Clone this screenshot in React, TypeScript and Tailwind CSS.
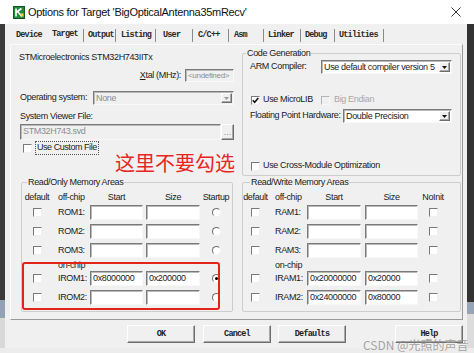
import React from "react";

const sunken =
  "border border-t-[#7a7a7a] border-l-[#7a7a7a] border-r-[#f8f8f8] border-b-[#f8f8f8] shadow-[inset_1px_1px_0_#b9b9b9]";
const raised =
  "border border-t-[#ffffff] border-l-[#ffffff] border-r-[#6e6e6e] border-b-[#6e6e6e] shadow-[inset_-1px_-1px_0_#a8a8a8]";

function Check({ checked = false, disabled = false }: { checked?: boolean; disabled?: boolean }) {
  return (
    <div
      className={`w-[9px] h-[9px] shrink-0 flex items-center justify-center border ${
        disabled
          ? "bg-[#f0f0f0] border-t-[#b4b4b4] border-l-[#b4b4b4] border-r-[#f8f8f8] border-b-[#f8f8f8]"
          : "bg-white border-t-[#7a7a7a] border-l-[#7a7a7a] border-r-[#f0f0f0] border-b-[#f0f0f0]"
      }`}
    >
      {checked && (
        <svg width="7" height="7" viewBox="0 0 7 7">
          <path d="M0.8 3.2 L2.7 5.2 L6.3 1" stroke="#111" strokeWidth="1.6" fill="none" />
        </svg>
      )}
    </div>
  );
}

function Radio({ on = false }: { on?: boolean }) {
  return (
    <div className="w-[9px] h-[9px] rounded-full bg-white border border-t-[#6e6e6e] border-l-[#6e6e6e] border-r-[#f4f4f4] border-b-[#f4f4f4] flex items-center justify-center">
      {on && <div className="w-[3px] h-[3px] rounded-full bg-black" />}
    </div>
  );
}

function Field({ w, value = "", disabled = false }: { w: string; value?: string; disabled?: boolean }) {
  return (
    <div
      className={`${w} h-[15px] shrink-0 ${sunken} ${
        disabled ? "bg-[#f0f0f0] text-[#8d8d8d]" : "bg-white text-[#222]"
      } flex items-center pl-[2px] text-[9px] tracking-[-0.35px] leading-none`}
    >
      {value}
    </div>
  );
}

function Select({ w, value, disabled = false }: { w: string; value: string; disabled?: boolean }) {
  return (
    <div
      className={`${w} h-[14px] shrink-0 ${sunken} ${
        disabled ? "bg-[#f0f0f0] text-[#8d8d8d]" : "bg-white text-[#1b1b1b]"
      } flex items-center pl-[2px] pr-[1px] text-[9px] tracking-[-0.35px] leading-none`}
    >
      <span className="flex-1">{value}</span>
      <div className={`w-[11px] h-[10px] bg-[#f0f0f0] ${raised} flex items-center justify-center`}>
        <svg width="5" height="3" viewBox="0 0 5 3">
          <path d="M0 0 H5 L2.5 3 Z" fill={disabled ? "#9a9a9a" : "#111"} />
        </svg>
      </div>
    </div>
  );
}

function Button({ label }: { label: string }) {
  return (
    <div
      className={`w-[68px] h-[18px] bg-[#f0f0f0] ${raised} flex items-center justify-center font-['Liberation_Mono',monospace] font-bold text-[8.5px] tracking-[-0.8px] text-[#222]`}
    >
      {label}
    </div>
  );
}

type Tab = { label: string; w: string; pl: string; sep: boolean; sel?: boolean; last?: boolean };
const tabs: Tab[] = [
  { label: "Device", w: "w-[38px]", pl: "pl-[6px]", sep: false },
  { label: "Target", w: "w-[35px]", pl: "pl-[4px]", sep: false, sel: true },
  { label: "Output", w: "w-[32px]", pl: "pl-[4px]", sep: true },
  { label: "Listing", w: "w-[40px]", pl: "pl-[5px]", sep: true },
  { label: "User", w: "w-[37px]", pl: "pl-[7px]", sep: true },
  { label: "C/C++", w: "w-[36px]", pl: "pl-[5px]", sep: true },
  { label: "Asm", w: "w-[35px]", pl: "pl-[5px]", sep: true },
  { label: "Linker", w: "w-[37px]", pl: "pl-[4px]", sep: true },
  { label: "Debug", w: "w-[34px]", pl: "pl-[4px]", sep: true },
  { label: "Utilities", w: "w-[50px]", pl: "pl-[4px]", sep: true, last: true },
];

function Legend({ text, ml }: { text: string; ml: string }) {
  return (
    <legend className={`${ml} px-[1px] h-[11px] leading-[11px] text-[9px] tracking-[-0.35px] text-[#1b1b1b]`}>{text}</legend>
  );
}

type Row = { name: string; start: string; size: string; on?: boolean };

function MemoryGroup({
  title,
  legendMl,
  colA,
  colB,
  colC,
  gap,
  colD,
  colE,
  last,
  offRows,
  onRows,
  radio,
}: {
  title: string;
  legendMl: string;
  colA: string;
  colB: string;
  colC: string;
  gap: string;
  colD: string;
  colE: string;
  last: string;
  offRows: Row[];
  onRows: Row[];
  radio: boolean;
}) {
  const lastCell = (r: Row) => (
    <div className={`${colE} flex justify-center`}>{radio ? <Radio on={r.on} /> : <Check />}</div>
  );
  const row = (r: Row, mt: string) => (
    <div key={r.name} className={`flex items-center h-[15px] ${mt}`}>
      <div className={`${colA} flex justify-center`}>
        <Check />
      </div>
      <div className={`${colB} text-[9px] tracking-[-0.35px] text-[#1b1b1b]`}>{r.name}</div>
      <Field w={colC} value={r.start} />
      <div className={gap} />
      <Field w={colD} value={r.size} />
      {lastCell(r)}
    </div>
  );
  return (
    <fieldset className="h-[135px] border border-[#cdcdcd] rounded-[2px] flex flex-col">
      <Legend text={title} ml={legendMl} />
      <div className="flex items-center h-[10px] mt-[4px] text-[9px] tracking-[-0.35px] text-[#1b1b1b] leading-none">
        <div className={`${colA} text-center`}>default</div>
        <div className={colB}>off-chip</div>
        <div className={`${colC} text-center`}>Start</div>
        <div className={gap} />
        <div className={`${colD} text-center`}>Size</div>
        <div className={`${colE} text-center`}>{last}</div>
      </div>
      {row(offRows[0], "mt-[3px]")}
      {row(offRows[1], "mt-[4px]")}
      {row(offRows[2], "mt-[4px]")}
      <div className="flex items-center h-[10px] mt-[2px] text-[9px] tracking-[-0.35px] text-[#1b1b1b] leading-none">
        <div className={colA} />
        <div className={colB}>on-chip</div>
      </div>
      {row(onRows[0], "mt-[1px]")}
      {row(onRows[1], "mt-[4px]")}
    </fieldset>
  );
}

function KeilIcon() {
  return (
    <svg width="12" height="13" viewBox="0 0 12 13">
      <rect x="0" y="0" width="12" height="13" fill="#1f8a3b" />
      <rect x="0.5" y="0.5" width="11" height="12" fill="none" stroke="#0e5a22" />
      <path d="M3 2.5 V10.5 M3 6.5 L8.5 2.5 M4.5 5.5 L9 10.5" stroke="#ffffff" strokeWidth="1.6" fill="none" />
      <rect x="7.5" y="7.5" width="3" height="3" fill="#f2d24b" />
    </svg>
  );
}

export default function App() {
  return (
    <div className="w-[474px] h-[353px] overflow-hidden bg-[#e6e6e6] flex flex-col relative font-['Liberation_Sans',Arial,sans-serif] text-[9px] text-[#1b1b1b]">
      {/* title bar */}
      <div className="h-[24px] shrink-0 bg-white flex items-center">
        <div className="ml-[13px] flex">
          <KeilIcon />
        </div>
        <div className="ml-[3px] text-[11px] tracking-[-0.3px] text-[#111] leading-none">
          Options for Target 'BigOpticalAntenna35mRecv'
        </div>
        <div className="ml-auto mr-[13px] flex">
          <svg width="10" height="10" viewBox="0 0 10 10">
            <path d="M0.5 0.5 L9.5 9.5 M9.5 0.5 L0.5 9.5" stroke="#333" strokeWidth="1" />
          </svg>
        </div>
      </div>

      <div className="flex h-[324px] shrink-0">
        {/* left background strip */}
        <div className="w-[5px] flex flex-col">
          <div className="h-[276px] bg-[#3a3a3a]" />
          <div className="h-[18px] bg-[#93a1b4]" />
          <div className="flex-1 bg-[#d9d9d9]" />
        </div>

        {/* dialog body */}
        <div className="w-[462px] bg-[#f0f0f0] flex flex-col">
          {/* tabs */}
          <div className="h-[20px] pl-[5px] flex items-end font-['Liberation_Mono',monospace] font-bold text-[8.5px] tracking-[-0.8px] text-[#2a2a2a]">
            {tabs.map((t) => (
              <div
                key={t.label}
                className={`${t.w} ${t.pl} shrink-0 flex items-center ${
                  t.sel ? "h-[16px] mb-[2px]" : "h-[13px] mb-[2px]"
                } ${t.sep ? "border-l border-l-[#8a8a8a]" : ""} ${t.last ? "border-r border-r-[#8a8a8a]" : ""}`}
              >
                {t.label}
              </div>
            ))}
          </div>

          {/* tab page */}
          <div className="ml-[5px] w-[453px] h-[276px] border border-t-[#fbfbfb] border-l-[#fbfbfb] border-r-[#9a9a9a] border-b-[#9a9a9a] flex">
            {/* left column */}
            <div className="w-[226px] flex flex-col">
              <div className="mt-[7px] h-[11px] pl-[8px] leading-[11px] tracking-[-0.35px]">
                STMicroelectronics STM32H743IITx
              </div>
              <div className="mt-[6px] h-[13px] flex items-center justify-end pr-[3px]">
                <span className="tracking-[-0.35px] mr-[4px]">
                  <span className="underline">X</span>tal (MHz):
                </span>
                <div className={`w-[49px] h-[13px] ${sunken} bg-[#f0f0f0] text-[#8d8d8d] text-[8px] tracking-[-0.3px] flex items-center pl-[2px] leading-none`}>
                  &lt;undefined&gt;
                </div>
              </div>
              <div className="mt-[9px] h-[14px] flex items-center pl-[9px]">
                <div className="w-[73px] tracking-[-0.35px]">Operating system:</div>
                <Select w="w-[141px]" value="None" disabled />
              </div>
              <div className="mt-[6px] h-[10px] pl-[9px] leading-[10px] tracking-[-0.35px]">System Viewer File:</div>
              <div className="mt-[3px] h-[16px] flex pl-[9px]">
                <div className={`w-[201px] h-[16px] ${sunken} bg-[#f0f0f0] text-[#8d8d8d] flex items-center pl-[2px] tracking-[-0.35px]`}>
                  STM32H743.svd
                </div>
                <div className={`w-[13px] h-[16px] bg-[#f0f0f0] ${raised} flex items-end justify-center pb-[2px] text-[#8d8d8d] leading-none`}>
                  ...
                </div>
              </div>
              <div className="mt-[1px] h-[14px] flex items-center pl-[12px]">
                <Check />
                <div className="ml-[3px] h-[14px] border border-dotted border-[#555] flex items-center px-[1px] tracking-[-0.45px] whitespace-nowrap">
                  Use Custom File
                </div>
              </div>
              <div className="-mt-[2px] h-[20px] pl-[104px] flex items-center font-['Noto_Sans_CJK_SC',sans-serif] text-[20px] leading-[20px] text-[#e8261e]">
                这里不要勾选
              </div>
              <div className="mt-[4px] ml-[10px] w-[212px] relative">
                <MemoryGroup
                  title="Read/Only Memory Areas"
                  legendMl="ml-[5px]"
                  colA="w-[30px]"
                  colB="w-[38px] pl-[6px]"
                  colC="w-[53px]"
                  gap="w-[3px]"
                  colD="w-[54px]"
                  colE="w-[32px]"
                  last="Startup"
                  radio
                  offRows={[
                    { name: "ROM1:", start: "", size: "" },
                    { name: "ROM2:", start: "", size: "" },
                    { name: "ROM3:", start: "", size: "" },
                  ]}
                  onRows={[
                    { name: "IROM1:", start: "0x8000000", size: "0x200000", on: true },
                    { name: "IROM2:", start: "", size: "" },
                  ]}
                />
                <div className="absolute left-[1px] top-[85px] w-[198px] h-[48px] border-2 border-[#e2231a] rounded-[3px]" />
              </div>
            </div>

            {/* right column */}
            <div className="w-[225px] flex flex-col">
              <fieldset className="mt-[3px] ml-[5px] w-[219px] h-[128px] border border-[#cdcdcd] rounded-[2px] flex flex-col">
                <Legend text="Code Generation" ml="ml-[3px]" />
                <div className="mt-[1px] h-[14px] flex items-center pl-[7px]">
                  <div className="w-[71px] tracking-[-0.35px]">ARM Compiler:</div>
                  <Select w="w-[131px]" value="Use default compiler version 5" />
                </div>
                <div className="mt-[21px] h-[10px] flex items-center pl-[8px]">
                  <Check checked />
                  <div className="ml-[3px] w-[58px] tracking-[-0.35px]">Use MicroLIB</div>
                  <Check disabled />
                  <div className="ml-[4px] tracking-[-0.35px] text-[#a8a8a8]">Big Endian</div>
                </div>
                <div className="mt-[4px] h-[14px] flex items-center pl-[7px]">
                  <div className="w-[93px] tracking-[-0.35px]">Floating Point Hardware:</div>
                  <Select w="w-[109px]" value="Double Precision" />
                </div>
                <div className="mt-[38px] h-[10px] flex items-center pl-[8px]">
                  <Check />
                  <div className="ml-[3px] tracking-[-0.35px]">Use Cross-Module Optimization</div>
                </div>
              </fieldset>
              <div className="mt-[1px] ml-[5px] w-[219px]">
                <MemoryGroup
                  title="Read/Write Memory Areas"
                  legendMl="ml-[7px]"
                  colA="w-[25px]"
                  colB="w-[39px] pl-[7px]"
                  colC="w-[54px]"
                  gap="w-[4px]"
                  colD="w-[53px]"
                  colE="w-[30px]"
                  last="NoInit"
                  radio={false}
                  offRows={[
                    { name: "RAM1:", start: "", size: "" },
                    { name: "RAM2:", start: "", size: "" },
                    { name: "RAM3:", start: "", size: "" },
                  ]}
                  onRows={[
                    { name: "IRAM1:", start: "0x20000000", size: "0x20000" },
                    { name: "IRAM2:", start: "0x24000000", size: "0x80000" },
                  ]}
                />
              </div>
            </div>
          </div>

          {/* buttons */}
          <div className="mt-[5px] h-[18px] flex pl-[122px]">
            <Button label="OK" />
            <div className="w-[8px]" />
            <Button label="Cancel" />
            <div className="w-[7px]" />
            <Button label="Defaults" />
            <div className="w-[49px]" />
            <Button label="Help" />
          </div>
        </div>

        {/* right background strip */}
        <div className="w-[7px] flex flex-col">
          <div className="h-[278px] bg-[#333333]" />
          <div className="h-[12px] bg-[#96a4b6]" />
          <div className="flex-1 bg-[#dcdcdc]" />
        </div>
      </div>
      <div className="flex-1 bg-[#ececec]" />

      {/* watermark */}
      <div className="absolute left-[363px] top-[339px] font-['Noto_Sans_CJK_SC',sans-serif] text-[12px] leading-[12px] text-[#8f8f8f]/80 whitespace-nowrap">
        CSDN @光照的声音
      </div>
    </div>
  );
}
